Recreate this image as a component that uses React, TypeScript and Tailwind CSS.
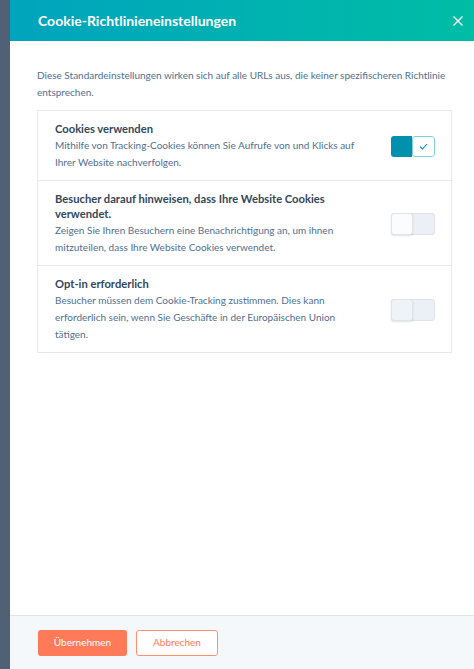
import React from "react";

function Toggle({ on, disabled }: { on: boolean; disabled?: boolean }) {
  if (on) {
    return (
      <div className="flex h-[21px] w-[44px] shrink-0 rounded-[3px] overflow-hidden">
        <div className="w-[21px] bg-[#0091ae]" />
        <div className="flex flex-1 items-center justify-center rounded-[3px] border border-[#7fd1de] bg-white">
          <svg width="9" height="7" viewBox="0 0 9 7" fill="none">
            <path d="M1 3.6 L3.4 6 L8 1" stroke="#0091ae" strokeWidth="1.1" />
          </svg>
        </div>
      </div>
    );
  }
  return (
    <div className="flex h-[22px] w-[44px] shrink-0 rounded-[3px] bg-[#eaf0f6] border border-[#dfe3eb]">
      <div
        className={`w-[22px] -my-px -ml-px rounded-[3px] border border-[#dfe3eb] shadow-[0_1px_2px_rgba(0,0,0,0.12)] ${
          disabled ? "bg-[#eef3f8]" : "bg-[#fbfcfd]"
        }`}
      />
    </div>
  );
}

function Row({
  title,
  desc,
  on,
  disabled,
  last,
}: {
  title: React.ReactNode;
  desc: React.ReactNode;
  on: boolean;
  disabled?: boolean;
  last?: boolean;
}) {
  return (
    <div
      className={`flex items-center gap-4 pl-[17px] pr-[16px] pt-[10px] pb-[9px] ${
        last ? "" : "border-b border-[#e5e9ef]"
      }`}
    >
      <div className="flex-1">
        <div className="text-[11.2px] font-bold leading-[15px] text-[#33475b]">{title}</div>
        <div className="mt-[1px] text-[10px] leading-[17px] text-[#516f90]">{desc}</div>
      </div>
      <Toggle on={on} disabled={disabled} />
    </div>
  );
}

export default function App() {
  return (
    <div
      className="flex h-[669px] w-[474px] bg-[#506175]"
      style={{ fontFamily: "Lato, 'Noto Sans', sans-serif" }}
    >
      <div className="w-[10px] shrink-0" />
      <div className="flex flex-1 flex-col bg-white">
        <div className="flex h-[41px] items-center justify-between bg-gradient-to-r from-[#00a4bd] to-[#00bda5] pl-[28px] pr-[11px]">
          <div className="text-[14px] font-bold text-white">Cookie-Richtlinieneinstellungen</div>
          <svg width="10" height="10" viewBox="0 0 10 10" fill="none">
            <path d="M0.5 0.5 L9.5 9.5 M9.5 0.5 L0.5 9.5" stroke="white" strokeWidth="1.4" />
          </svg>
        </div>
        <div className="flex-1 pl-[27px] pr-[22px] pt-[26px]">
          <p className="whitespace-nowrap text-[10px] leading-[17px] text-[#516f90]">
            Diese Standardeinstellungen wirken sich auf alle URLs aus, die keiner spezifischeren Richtlinie
            <br />
            entsprechen.
          </p>
          <div className="mt-[9px] border border-[#e5e9ef]">
            <Row
              title="Cookies verwenden"
              desc={
                <>
                  Mithilfe von Tracking-Cookies können Sie Aufrufe von und Klicks auf
                  <br />
                  Ihrer Website nachverfolgen.
                </>
              }
              on
            />
            <Row
              title={
                <>
                  Besucher darauf hinweisen, dass Ihre Website Cookies
                  <br />
                  verwendet.
                </>
              }
              desc={
                <>
                  Zeigen Sie Ihren Besuchern eine Benachrichtigung an, um ihnen
                  <br />
                  mitzuteilen, dass Ihre Website Cookies verwendet.
                </>
              }
              on={false}
            />
            <Row
              title="Opt-in erforderlich"
              desc={
                <>
                  Besucher müssen dem Cookie-Tracking zustimmen. Dies kann
                  <br />
                  erforderlich sein, wenn Sie Geschäfte in der Europäischen Union
                  <br />
                  tätigen.
                </>
              }
              on={false}
              disabled
              last
            />
          </div>
        </div>
        <div className="flex h-[54px] items-center gap-[9px] border-t border-[#dfe3eb] bg-[#f5f8fa] pl-[28px]">
          <button className="h-[26px] w-[89px] rounded-[3px] bg-[#ff7a59] text-[10px] text-white">
            Übernehmen
          </button>
          <button className="h-[26px] w-[82px] rounded-[3px] border border-[#ff8f73] bg-white text-[10px] text-[#ff7a59]">
            Abbrechen
          </button>
        </div>
      </div>
    </div>
  );
}
